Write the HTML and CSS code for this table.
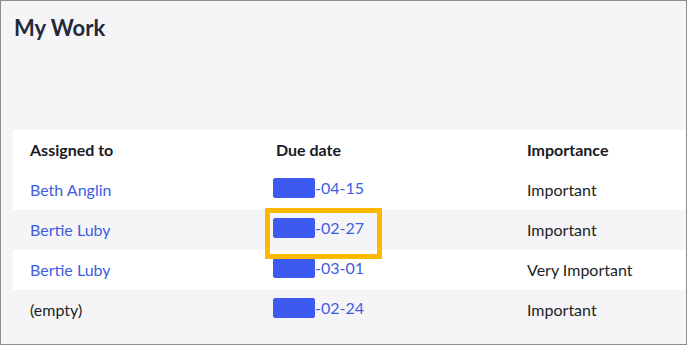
FILE: index.html
```
<!DOCTYPE html>
<html lang="en">
<head>
<meta charset="utf-8">
<title>My Work</title>
<link rel="stylesheet" href="styles.css">
</head>
<body>
<div class="page">
  <h1 class="title">My Work</h1>
  <table class="work-table">
    <colgroup>
      <col class="col-assigned">
      <col class="col-due">
      <col class="col-importance">
    </colgroup>
    <thead>
      <tr>
        <th>Assigned to</th>
        <th>Due date</th>
        <th>Importance</th>
      </tr>
    </thead>
    <tbody>
      <tr>
        <td><a class="link" href="#">Beth Anglin</a></td>
        <td><a class="link date" href="#"><span class="year"></span>-04-15</a></td>
        <td>Important</td>
      </tr>
      <tr class="alt">
        <td><a class="link" href="#">Bertie Luby</a></td>
        <td class="focus-cell"><a class="link date" href="#"><span class="year"></span>-02-27</a></td>
        <td>Important</td>
      </tr>
      <tr>
        <td><a class="link" href="#">Bertie Luby</a></td>
        <td><a class="link date" href="#"><span class="year"></span>-03-01</a></td>
        <td>Very Important</td>
      </tr>
      <tr class="alt">
        <td>(empty)</td>
        <td><a class="link date" href="#"><span class="year"></span>-02-24</a></td>
        <td>Important</td>
      </tr>
    </tbody>
  </table>
</div>
</body>
</html>
```
FILE: styles.css
```
* { box-sizing: border-box; }

html, body {
  margin: 0;
  padding: 0;
}

body {
  font-family: Lato, "Open Sans", sans-serif;
  color: #1c1f26;
  background: #f5f5f7;
}

.page {
  width: 687px;
  height: 345px;
  border: 1px solid #8f8f8f;
  background: #f5f5f7;
  overflow: hidden;
}

.title {
  margin: 0;
  padding: 13px 0 0 13px;
  font-size: 22px;
  line-height: 28px;
  font-weight: 700;
  color: #232a3b;
}

.work-table {
  margin: 88px 0 0 12px;
  width: 673px;
  border-collapse: collapse;
  table-layout: fixed;
  font-size: 16px;
}

.col-assigned { width: 246px; }
.col-due { width: 251px; }

.work-table th,
.work-table td {
  height: 40px;
  padding: 0 0 2px 17px;
  text-align: left;
  vertical-align: middle;
  white-space: nowrap;
}

.work-table th {
  font-weight: 700;
  color: #181a1f;
}

.work-table thead tr,
.work-table tbody tr {
  background: #ffffff;
}

.work-table tbody tr.alt {
  background: #f5f5f7;
}

.link {
  color: #3e5ee0;
  text-decoration: none;
}

.date {
  display: inline-flex;
  align-items: center;
}

.year {
  display: inline-block;
  width: 42px;
  height: 20px;
  margin-left: -3px;
  border-radius: 2px;
  background: #3d5af0;
}

.focus-cell {
  position: relative;
}

.focus-cell::after {
  content: "";
  position: absolute;
  left: 6px;
  top: -2px;
  width: 107px;
  height: 41px;
  border: 5px solid #fdb900;
  pointer-events: none;
}
```
